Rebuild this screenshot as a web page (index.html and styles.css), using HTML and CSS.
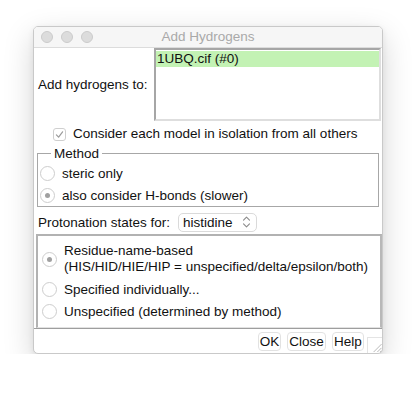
FILE: index.html
```html
<!DOCTYPE html>
<html>
<head>
<meta charset="utf-8">
<link rel="stylesheet" href="styles.css">
</head>
<body>
<div class="window">
  <div class="titlebar">
    <div class="lights"><span></span><span></span><span></span></div>
    <div class="title">Add Hydrogens</div>
  </div>
  <div class="content">
    <div class="target-row">
      <div class="target-label">Add hydrogens to:</div>
      <div class="listbox">
        <div class="item selected">1UBQ.cif (#0)</div>
      </div>
    </div>
    <div class="check-row">
      <span class="checkbox"><svg width="13" height="13" viewBox="0 0 13 13"><path d="M3.4 6.9 L5.6 9.2 L9.6 3.8" fill="none" stroke="#9b9b9b" stroke-width="1.2" stroke-linecap="round" stroke-linejoin="round"/></svg></span>
      <span>Consider each model in isolation from all others</span>
    </div>
    <fieldset class="method">
      <legend>Method</legend>
      <div class="radio-row"><span class="radio"></span><span>steric only</span></div>
      <div class="radio-row"><span class="radio on"></span><span>also consider H-bonds (slower)</span></div>
    </fieldset>
    <div class="proton-row">
      <span>Protonation states for:</span>
      <span class="select">histidine<svg width="9" height="14" viewBox="0 0 9 14"><path d="M1.5 5.2 L4.5 2.2 L7.5 5.2 M1.5 8.8 L4.5 11.8 L7.5 8.8" fill="none" stroke="#8c8c8c" stroke-width="1.1" stroke-linecap="round" stroke-linejoin="round"/></svg></span>
    </div>
    <div class="frame2">
      <div class="radio-row tall"><span class="radio on"></span><span class="two-line">Residue-name-based<br>(HIS/HID/HIE/HIP = unspecified/delta/epsilon/both)</span></div>
      <div class="radio-row"><span class="radio"></span><span>Specified individually...</span></div>
      <div class="radio-row"><span class="radio"></span><span>Unspecified (determined by method)</span></div>
    </div>
  </div>
  <div class="buttonbar">
    <span class="btn btn-ok">OK</span>
    <span class="btn btn-close">Close</span>
    <span class="btn btn-help">Help</span>
    <span class="grip"><svg width="15" height="15" viewBox="0 0 15 15"><path d="M14.5 6 L6 14.5 M14.5 10 L10 14.5 M14.5 13 L13 14.5" fill="none" stroke="#b5b5b5" stroke-width="1"/></svg></span>
  </div>
</div>
</body>
</html>
```
FILE: styles.css
```css
html, body {
  margin: 0;
  padding: 0;
  background: #ffffff;
}
body {
  font-family: "Liberation Sans", Arial, sans-serif;
  font-size: 13.5px;
  color: #111;
}
.window {
  margin: 26px 0 0 33px;
  width: 350px;
  height: 328px;
  box-sizing: border-box;
  border: 1px solid #c9c9c9;
  border-radius: 5px;
  background: #fff;
  box-shadow: 0 10px 30px rgba(0,0,0,0.17), 0 2px 6px rgba(0,0,0,0.07);
  overflow: hidden;
  display: flex;
  flex-direction: column;
}
.titlebar {
  position: relative;
  height: 20px;
  flex: none;
  background: #f6f6f6;
  border-bottom: 1px solid #dcdcdc;
}
.lights {
  position: absolute;
  left: 7px;
  top: 4px;
  display: flex;
  gap: 8px;
}
.lights span {
  width: 12px;
  height: 12px;
  box-sizing: border-box;
  border-radius: 50%;
  background: #dcdcdc;
  border: 0.5px solid #cbcbcb;
}
.title {
  text-align: center;
  line-height: 20px;
  color: #a9a9a9;
}
.content {
  flex: 1;
  display: flex;
  flex-direction: column;
}
.target-row {
  display: flex;
  height: 73px;
  align-items: center;
}
.target-label {
  flex: 0 0 116px;
  padding-left: 4px;
}
.listbox {
  flex: 1;
  align-self: stretch;
  margin-right: 1px;
  border-top: 2px solid #a6a6a6;
  border-left: 2px solid #a6a6a6;
  border-right: 2px solid #dedede;
  border-bottom: 2px solid #dedede;
  padding-top: 1px;
}
.item {
  height: 16px;
  line-height: 16px;
  padding-left: 1px;
}
.item.selected {
  background: #c3f2b4;
}
.check-row {
  height: 25px;
  display: flex;
  align-items: center;
  padding-left: 19px;
  gap: 7px;
}
.checkbox {
  width: 13px;
  height: 13px;
  box-sizing: border-box;
  border: 1px solid #cfcfcf;
  border-radius: 3px;
  margin-top: 2px;
  display: flex;
}
.checkbox svg {
  margin: -1px;
}
.method {
  margin: 0 3px;
  padding: 1px 2px 0 2px;
  border: 1px solid #a7a7a7;
  min-width: 0;
}
.method legend {
  padding: 0 3px;
  margin-left: 11px;
  line-height: 15px;
}
.radio-row {
  height: 22px;
  display: flex;
  align-items: center;
  gap: 7px;
}
.radio {
  width: 15px;
  height: 15px;
  box-sizing: border-box;
  border-radius: 50%;
  border: 1px solid #cdcdcd;
  background: #fff;
  flex: none;
  display: flex;
  align-items: center;
  justify-content: center;
}
.radio.on::after {
  content: "";
  width: 5px;
  height: 5px;
  border-radius: 50%;
  background: #a0a0a0;
}
.proton-row {
  height: 27px;
  box-sizing: border-box;
  padding: 3px 0 0 4px;
  display: flex;
  align-items: center;
  gap: 8px;
}
.select {
  height: 19px;
  width: 79px;
  box-sizing: border-box;
  border: 1px solid #dadada;
  border-radius: 5px;
  display: flex;
  align-items: center;
  justify-content: space-between;
  padding: 0 5px 0 4px;
}
.frame2 {
  flex: 1;
  margin-left: 2px;
  border-top: 2px solid #b2b2b2;
  border-left: 2px solid #b2b2b2;
  border-right: 2px solid #b8b8b8;
  border-bottom: 1px solid #e2e2e2;
  padding: 4px 0 0 4px;
}
.radio-row.tall {
  height: auto;
  padding: 3px 0;
}
.two-line {
  line-height: 16px;
}
.buttonbar {
  height: 24px;
  flex: none;
  border-top: 1px solid #9e9e9e;
  display: flex;
  justify-content: flex-end;
  align-items: center;
  gap: 6px;
}
.btn {
  height: 19px;
  box-sizing: border-box;
  line-height: 17px;
  text-align: center;
  border: 1px solid #e2e2e2;
  border-radius: 4px;
  background: #fff;
}
.btn-ok { width: 23px; }
.btn-close { width: 39px; }
.btn-help { width: 32px; }
.grip {
  align-self: flex-end;
  width: 15px;
  height: 16px;
  box-sizing: border-box;
  border-left: 1px solid #e4e4e4;
  border-top: 1px solid #e4e4e4;
  margin-left: -3px;
  display: flex;
  align-items: flex-end;
}
```
